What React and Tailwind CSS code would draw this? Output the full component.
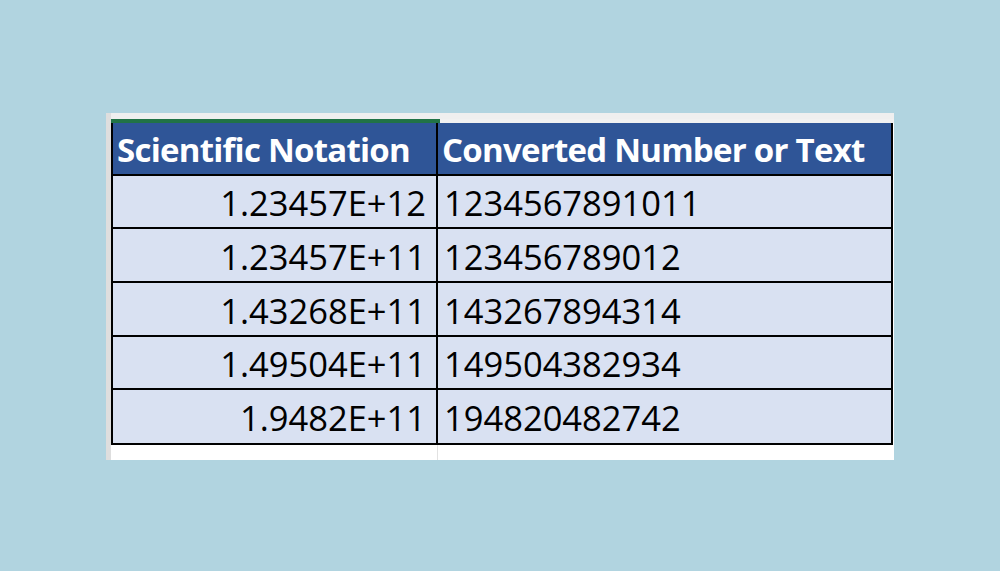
const rows = [
  { sci: '1.23457E+12', num: '1234567891011', h: 'h-[53px]' },
  { sci: '1.23457E+11', num: '123456789012', h: 'h-[54px]' },
  { sci: '1.43268E+11', num: '143267894314', h: 'h-[54px]' },
  { sci: '1.49504E+11', num: '149504382934', h: 'h-[53px]' },
  { sci: '1.9482E+11', num: '194820482742', h: 'h-[53px]' },
]

export default function App() {
  return (
    <div
      className="flex min-h-screen items-center justify-center bg-[#b1d4e0] pt-[2px]"
      style={{ fontFamily: '"Open Sans", "Noto Sans", sans-serif' }}
    >
      <div className="flex w-[788px] bg-white">
        <div className="w-[5px] bg-[#dedede]" />
        <div className="flex w-[783px] flex-col">
          <div className="h-[6px] bg-[#efefef]" />
          <div className="flex h-[4px]">
            <div className="w-[329px] bg-[#217346]" />
            <div className="flex-1 bg-[#f1f1f1]" />
          </div>
          <div className="mr-[1px] border-x-2 border-b-2 border-black">
            <div className="flex h-[53px] border-b-2 border-black bg-[#2f5597] text-[33px] font-bold tracking-[-0.75px] text-white">
              <div className="flex w-[325px] items-center border-r-2 border-black pl-[4px] pt-[2px]">
                Scientific Notation
              </div>
              <div className="flex flex-1 items-center pl-[4px] pt-[2px]">Converted Number or Text</div>
            </div>
            {rows.map((r, i) => (
              <div
                key={r.num}
                className={`flex ${r.h} bg-[#d9e1f2] text-[34.5px] text-black ${i < rows.length - 1 ? 'border-b-2 border-black' : ''}`}
              >
                <div className="flex w-[325px] items-center justify-end border-r-2 border-black pr-[10px] pt-[3px]">
                  {r.sci}
                </div>
                <div className="flex flex-1 items-center pl-[6px] pt-[3px]">{r.num}</div>
              </div>
            ))}
          </div>
          <div className="flex h-[15px]">
            <div className="w-[327px] border-r border-[#e2e2e2]" />
          </div>
        </div>
      </div>
    </div>
  )
}
